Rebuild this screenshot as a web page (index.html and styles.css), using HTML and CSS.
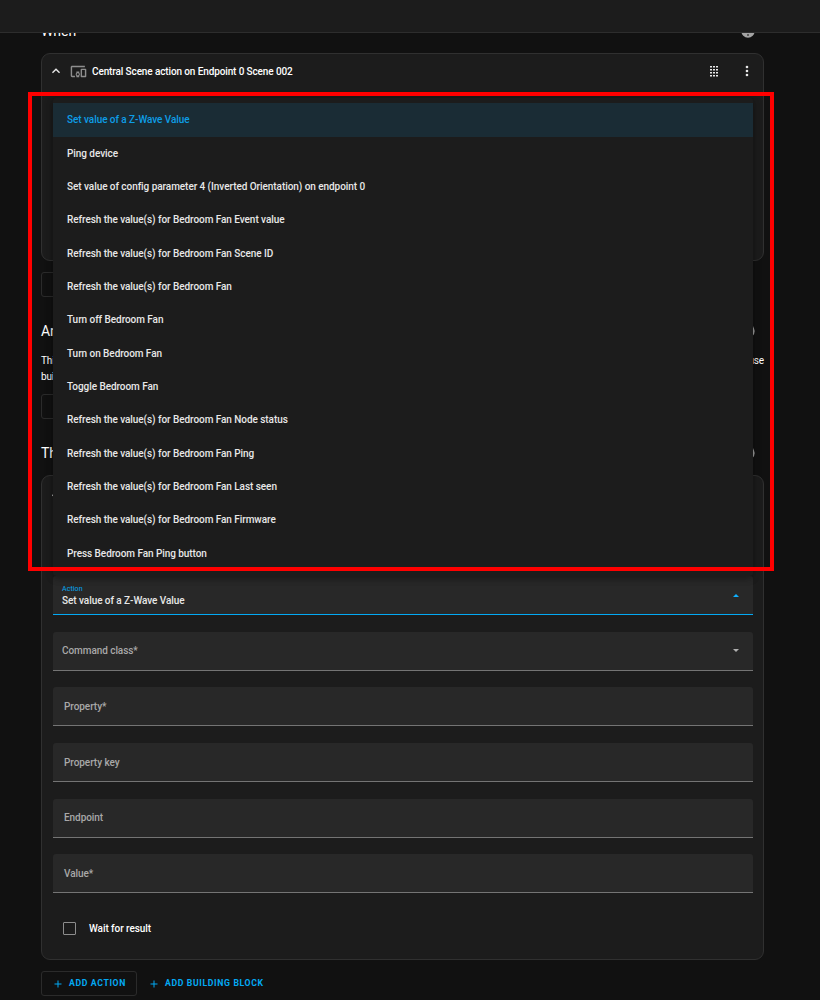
FILE: index.html
```html
<!DOCTYPE html>
<html lang="en">
<head>
<meta charset="utf-8">
<title>Edit automation</title>
<link rel="stylesheet" href="styles.css">
</head>
<body>
<header class="topbar"></header>
<main class="page">
  <div class="section-head first"><h2>When</h2>
    <svg class="help" viewBox="0 0 24 24"><path d="M15.07 11.25l-.9.92C13.45 12.89 13 13.5 13 15h-2v-.5c0-1.11.45-2.11 1.17-2.83l1.24-1.26c.37-.36.59-.86.59-1.41a2 2 0 0 0-4 0H8a4 4 0 0 1 8 0c0 .88-.36 1.67-.93 2.25M13 19h-2v-2h2M12 2a10 10 0 1 0 0 20 10 10 0 0 0 0-20z"/></svg>
  </div>
  <section class="card trigger">
    <div class="card-head">
      <svg class="icon chevron" viewBox="0 0 24 24"><path d="M7.41 15.41L12 10.83l4.59 4.58L18 14l-6-6-6 6z"/></svg>
      <svg class="icon devices" viewBox="0 0 24 24"><path d="M3 6h18V4H3c-1.1 0-2 .9-2 2v12c0 1.1.9 2 2 2h4v-2H3V6zm10 6H9v1.78c-.61.55-1 1.33-1 2.22s.39 1.67 1 2.22V20h4v-1.78c.61-.55 1-1.34 1-2.22s-.39-1.67-1-2.22V12zm-2 5.5c-.83 0-1.5-.67-1.5-1.5s.67-1.5 1.5-1.5 1.5.67 1.5 1.5-.67 1.5-1.5 1.5zM22 8h-6c-.5 0-1 .5-1 1v10c0 .5.5 1 1 1h6c.5 0 1-.5 1-1V9c0-.5-.5-1-1-1zm-1 10h-4v-8h4v8z"/></svg>
      <h3>Central Scene action on Endpoint 0 Scene 002</h3>
      <svg class="icon grid" viewBox="0 0 16 16"><path d="M4 3h2v1.5H4zM7 3h2v1.5H7zM10 3h2v1.5h-2zM4 6h2v1.5H4zM7 6h2v1.5H7zM10 6h2v1.5h-2zM4 9h2v1.5H4zM7 9h2v1.5H7zM10 9h2v1.5h-2zM4 12h2v1.5H4zM7 12h2v1.5H7zM10 12h2v1.5h-2z"/></svg>
      <svg class="icon dots" viewBox="0 0 24 24"><path d="M12 16a2 2 0 1 1 0 4 2 2 0 0 1 0-4m0-6a2 2 0 1 1 0 4 2 2 0 0 1 0-4m0-6a2 2 0 1 1 0 4 2 2 0 0 1 0-4z"/></svg>
    </div>
  </section>
  <div class="actions"><button class="btn outlined"></button></div>
  <div class="section-head and"><h2>And if</h2>
    <svg class="help" viewBox="0 0 24 24"><circle cx="12" cy="12" r="10"/></svg>
  </div>
  <p class="intro"><span class="line">This list of conditions needs to be satisfied for the automation to run. A condition can be satisfied or not at any given time. You can use</span><span>building blocks to create more complex conditions.</span></p>
  <div class="actions"><button class="btn outlined"></button></div>
  <div class="section-head then"><h2>Then do</h2>
    <svg class="help" viewBox="0 0 24 24"><circle cx="12" cy="12" r="10"/></svg>
  </div>
  <section class="card action">
    <div class="card-head">
      <svg class="icon chevron" viewBox="0 0 24 24"><path d="M7.41 15.41L12 10.83l4.59 4.58L18 14l-6-6-6 6z"/></svg>
    </div>
    <div class="fields">
      <div class="field select active">
        <div class="value"><label>Action</label><span>Set value of a Z-Wave Value</span></div>
        <svg class="caret" viewBox="0 0 6 3"><path d="M0 3l3-3 3 3z"/></svg>
        <ul class="menu">
          <li class="selected">Set value of a Z-Wave Value</li>
          <li>Ping device</li>
          <li>Set value of config parameter 4 (Inverted Orientation) on endpoint 0</li>
          <li>Refresh the value(s) for Bedroom Fan Event value</li>
          <li>Refresh the value(s) for Bedroom Fan Scene ID</li>
          <li>Refresh the value(s) for Bedroom Fan</li>
          <li>Turn off Bedroom Fan</li>
          <li>Turn on Bedroom Fan</li>
          <li>Toggle Bedroom Fan</li>
          <li>Refresh the value(s) for Bedroom Fan Node status</li>
          <li>Refresh the value(s) for Bedroom Fan Ping</li>
          <li>Refresh the value(s) for Bedroom Fan Last seen</li>
          <li>Refresh the value(s) for Bedroom Fan Firmware</li>
          <li>Press Bedroom Fan Ping button</li>
        </ul>
      </div>
      <div class="field select"><span>Command class*</span><svg class="caret" viewBox="0 0 6 3"><path d="M0 0l3 3 3-3z"/></svg></div>
      <div class="field"><span>Property*</span></div>
      <div class="field"><span>Property key</span></div>
      <div class="field"><span>Endpoint</span></div>
      <div class="field"><span>Value*</span></div>
    </div>
    <div class="check"><span class="box"></span><span>Wait for result</span></div>
  </section>
  <div class="actions last">
    <button class="btn outlined"><svg class="plus" viewBox="0 0 8 8"><path d="M4 .5v7M.5 4h7"/></svg>ADD ACTION</button>
    <button class="btn"><svg class="plus" viewBox="0 0 8 8"><path d="M4 .5v7M.5 4h7"/></svg>ADD BUILDING BLOCK</button>
  </div>
</main>
<div class="highlight"></div>
</body>
</html>
```
FILE: styles.css
```css
* { box-sizing: border-box; }
body {
  margin: 0;
  position: relative;
  height: 1000px;
  overflow: hidden;
  background: #111;
  color: #e8e8e8;
  font: 500 10px/15px Roboto, sans-serif;
  letter-spacing: -.06px;
}
h2, h3, p, ul { margin: 0; padding: 0; }
.topbar {
  position: absolute;
  top: 0; left: 0; right: 0;
  z-index: 2;
  height: 33px;
  background: #1c1c1c;
  border-bottom: 1px solid #2d2d2d;
}
.page { width: 723px; margin-left: 41px; padding-top: 20px; }
.section-head { display: flex; align-items: center; justify-content: space-between; padding-right: 9px; height: 20px; }
.section-head h2 { font-size: 14px; line-height: 20px; font-weight: 400; color: #fff; }
.section-head.first { height: 33px; padding-bottom: 11px; }
.section-head.and { margin-top: 24px; }
.section-head.then { margin-top: 24px; margin-bottom: 12px; }
.help { width: 16px; height: 16px; margin-right: -1px; fill: #a3a3a3; }
.card { background: #1c1c1c; border: 1px solid #303030; border-radius: 9px; }
.trigger { height: 208px; }
.action { height: 485px; }
.card-head { display: flex; align-items: center; height: 34px; padding: 0 8px 0 6px; }
.action .card-head { height: 35px; }
.card-head h3 { flex: 1; font-size: 10px; font-weight: 500; letter-spacing: -.12px; color: #fff; }
.icon { width: 16px; height: 16px; fill: #e8e8e8; }
.devices { width: 17px; height: 17px; fill: #8e8e8e; margin: 0 5px 0 6px; }
.grid { margin-right: 17px; }
.actions { display: flex; margin-top: 11px; }
.btn {
  display: flex;
  align-items: center;
  height: 25px;
  padding: 0 11px 0 12px;
  border: 1px solid transparent;
  border-radius: 3px;
  background: none;
  color: #03a9f4;
  font: 700 8.7px/23px Roboto, sans-serif;
  letter-spacing: .63px;
}
.outlined { width: 96px; border-color: #2b2b2b; white-space: nowrap; }
.plus { flex: none; width: 8px; height: 8px; margin-right: 7px; fill: none; stroke: #03a9f4; stroke-width: 1; }
.intro { padding-top: 12px; height: 42px; font-weight: 400; color: #fff; letter-spacing: -.15px; }
.intro span { display: block; line-height: 16px; white-space: nowrap; }
.intro .line { width: 723px; text-align-last: justify; }
.fields { display: flex; flex-direction: column; gap: 16.7px; padding: 65px 10px 0 11px; }
.field {
  position: relative;
  display: flex;
  align-items: center;
  justify-content: space-between;
  height: 39px;
  padding: 0 14px 0 11px;
  background: #282828;
  border-bottom: 1px solid #747474;
  border-radius: 3px 3px 0 0;
  color: #a8a8a8;
}
.select { padding-left: 9px; }
.field.active { border-bottom-color: #03a9f4; color: #e8e8e8; }
.value { display: flex; flex-direction: column; padding-top: 1px; }
.value label { font-size: 7px; line-height: 11px; font-weight: 400; letter-spacing: .1px; color: #03a9f4; }
.value span { line-height: 12px; }
.caret { width: 6px; height: 3px; fill: #b0b0b0; }
.active .caret { fill: #0db0ff; }
.menu {
  position: absolute;
  left: 0; right: 0; bottom: 38px;
  z-index: 1;
  padding: 5px 0 6px;
  background: #1c1c1c;
  border-radius: 3px;
  box-shadow: 0 3px 6px rgba(0,0,0,.25), 0 1px 10px rgba(0,0,0,.2);
  list-style: none;
}
.menu li { height: 33.35px; padding-left: 14px; line-height: 33.35px; }
.menu .selected { background: #1a2c35; color: #0d9ee8; }
.check { display: flex; align-items: center; gap: 13px; padding: 28px 21px 0; color: #fff; }
.box { width: 13px; height: 13px; border: 1px solid #8d8d8d; border-radius: 1px; }
.highlight {
  position: absolute;
  left: 28px; top: 92px;
  z-index: 3;
  width: 746px; height: 479px;
  border: 4px solid #f00;
}
```
